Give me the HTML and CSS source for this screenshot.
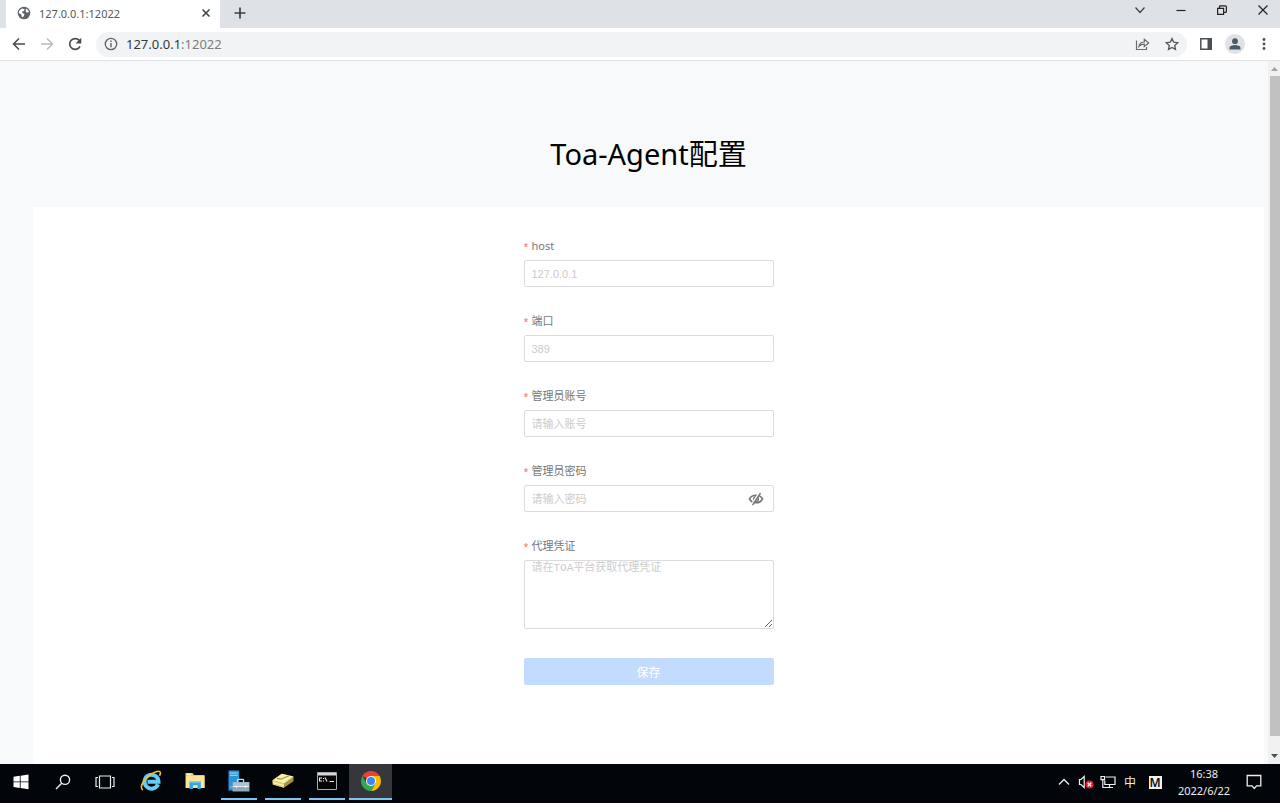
FILE: index.html
```
<!DOCTYPE html>
<html lang="zh-CN">
<head>
  <meta charset="UTF-8">
  <meta name="viewport" content="width=device-width, initial-scale=1.0">
  <title>Toa-Agent配置</title>
  <link rel="stylesheet" href="styles.css">
</head>
<body>
  <header class="browser">
    <div class="tabstrip">
      <div class="tab-before"></div>
      <div class="tab">
        <svg width="14" height="14" viewBox="0 0 14 14"><circle cx="7" cy="7" r="6.3" fill="#5f6368"/><path d="M2 5.2C3 3.6 4.300 2.600 6 2.400L7.800 3.400 6.500 5.200 4.800 5.800 5.600 7.300 7.500 7.700 7 9.500 5.800 11.600 4.700 10.500 4.300 8.500 1.800 7.100zM9 2.400l2 1.500 1 2-1.800.8L8.600 5.600z" fill="#fff"/></svg>
        <span class="tab-title">127.0.0.1:12022</span>
        <button class="icon-btn tab-close" aria-label="关闭标签页">
          <svg width="10" height="10" viewBox="0 0 10 10" fill="none" stroke="#3c4043" stroke-width="1.500"><path d="M1.500 1.500l7 7M8.500 1.500l-7 7"/></svg>
        </button>
      </div>
      <button class="icon-btn new-tab" aria-label="新标签页">
        <svg width="12" height="12" viewBox="0 0 12 12" fill="none" stroke="#3c4043" stroke-width="1.700"><path d="M6 .5v11M.5 6h11"/></svg>
      </button>
      <div class="window-controls">
        <button class="icon-btn" aria-label="搜索标签页">
          <svg width="12" height="12" viewBox="0 0 12 12" fill="none" stroke="#3c4043" stroke-width="1.200"><path d="M1.500 3.500L6 8.500l4.500-5"/></svg>
        </button>
        <button class="icon-btn" aria-label="最小化">
          <svg width="12" height="12" viewBox="0 0 12 12" fill="none" stroke="#222" stroke-width="1.200"><path d="M1.500 6.500h9"/></svg>
        </button>
        <button class="icon-btn" aria-label="还原">
          <svg width="12" height="12" viewBox="0 0 12 12" fill="none" stroke="#222" stroke-width="1.200"><path d="M1.600 4.400h6v6h-6zM3.500 4V2.700q0-.9.900-.9h5q1 0 1 1v4.600q0 1-1 1H8"/></svg>
        </button>
        <button class="icon-btn" aria-label="关闭">
          <svg width="12" height="12" viewBox="0 0 12 12" fill="none" stroke="#222" stroke-width="1.200"><path d="M1.500 1.500l9 9M10.500 1.500l-9 9"/></svg>
        </button>
      </div>
    </div>

    <div class="toolbar">
      <button class="icon-btn nav" aria-label="后退">
        <svg width="14" height="14" viewBox="0 0 14 14" fill="none" stroke="#4a4d51" stroke-width="1.600"><path d="M13 7H1.800M7 1.500L1.500 7 7 12.500"/></svg>
      </button>
      <button class="icon-btn nav" aria-label="前进" disabled>
        <svg width="14" height="14" viewBox="0 0 14 14" fill="none" stroke="#b9bbbe" stroke-width="1.500"><path d="M1 7h11.200M7 1.500L12.500 7 7 12.500"/></svg>
      </button>
      <button class="icon-btn nav" aria-label="重新加载">
        <svg width="14" height="14" viewBox="0 0 14 14"><path d="M12 9.300A5.400 5.400 0 1 1 11 3.200L12 4.500" fill="none" stroke="#4a4d51" stroke-width="1.700"/><path d="M13.300.8v5.700H7.600z" fill="#4a4d51"/></svg>
      </button>
      <div class="omnibox">
        <svg class="info" width="14" height="14" viewBox="0 0 14 14"><circle cx="7" cy="7" r="5.700" fill="none" stroke="#5f6368" stroke-width="1.300"/><path d="M6.300 6h1.400v4.300H6.300zM6.300 3.500h1.400v1.400H6.300z" fill="#5f6368"/></svg>
        <span class="url">127.0.0.1<span class="port">:12022</span></span>
        <button class="icon-btn" aria-label="分享">
          <svg width="15" height="14" viewBox="0 0 15 14" fill="none" stroke="#686b6f" stroke-width="1.200"><path d="M1.500 3.500v9h10V10M4 9.300C4.400 6.400 6 5 9.300 5V2.200L13.700 6 9.300 9.500V7.200C6.800 7.200 5.300 7.800 4 9.300z"/></svg>
        </button>
        <button class="icon-btn" aria-label="收藏">
          <svg width="14" height="14" viewBox="0 0 14 14" fill="none" stroke="#55585c" stroke-width="1.300"><path d="M7 1.600l1.700 3.600 4 .5-3 2.700.8 4L7 10.400l-3.500 2 .8-4-3-2.700 4-.5z"/></svg>
        </button>
      </div>
      <button class="icon-btn" aria-label="侧边栏">
        <svg width="14" height="14" viewBox="0 0 14 14"><path d="M1.800 1.800h10.400v10.400H1.800z" fill="none" stroke="#4d5156" stroke-width="1.500"/><path d="M8.500 1h4.500v12H8.500z" fill="#4d5156"/></svg>
      </button>
      <button class="icon-btn" aria-label="用户">
        <svg width="20" height="20" viewBox="0 0 20 20"><circle cx="10" cy="10" r="10" fill="#e1e2e5"/><circle cx="10" cy="7.200" r="2.900" fill="#4c5a6a"/><path d="M4.500 15.500v-1.700c0-2 3.500-2.900 5.500-2.900s5.500.9 5.500 2.900v1.700z" fill="#4c5a6a"/></svg>
      </button>
      <button class="icon-btn" aria-label="更多">
        <svg width="4" height="14" viewBox="0 0 4 14" fill="#4a4d51"><circle cx="2" cy="2.500" r="1.400"/><circle cx="2" cy="7" r="1.400"/><circle cx="2" cy="11.500" r="1.400"/></svg>
      </button>
    </div>
  </header>

  <div class="viewport">
    <main class="page">
      <h1>Toa-Agent配置</h1>
      <section class="panel">
        <form class="form">
          <div class="form-item">
            <label for="host">host</label>
            <input type="text" id="host" placeholder="127.0.0.1">
          </div>
          <div class="form-item">
            <label for="port">端口</label>
            <input type="text" id="port" placeholder="389">
          </div>
          <div class="form-item">
            <label for="account">管理员账号</label>
            <input type="text" id="account" placeholder="请输入账号">
          </div>
          <div class="form-item">
            <label for="password">管理员密码</label>
            <div class="password">
              <input type="password" id="password" placeholder="请输入密码">
              <button type="button" class="icon-btn eye" aria-label="显示密码">
                <svg width="16" height="14" viewBox="0 0 16 14" fill="none" stroke="#777"><path d="M1.500 7C4.300 2 11.700 2 14.500 7 11.700 12 4.300 12 1.500 7z" stroke-width="1.700"/><circle cx="8" cy="7" r="2.300" stroke-width="1.500"/><path d="M11.200 1L3.200 13" stroke="#fff" stroke-width="1.500"/><path d="M12.500 1.200L4.500 13.200" stroke-width="1.500"/></svg>
              </button>
            </div>
          </div>
          <div class="form-item">
            <label for="credential">代理凭证</label>
            <textarea id="credential" placeholder="请在TOA平台获取代理凭证"></textarea>
          </div>
          <button type="submit" class="save">保存</button>
        </form>
      </section>
    </main>
    <div class="scrollbar">
      <svg width="12" height="15" viewBox="0 0 12 15"><path d="M3 10l3.500-4 3.500 4z" fill="#a3a3a3"/></svg>
      <div class="thumb"></div>
      <svg class="down" width="12" height="28" viewBox="0 0 12 28"><path d="M3 18h7l-3.500 4z" fill="#505050"/></svg>
    </div>
  </div>

  <footer class="taskbar">
    <div class="start">
      <button class="icon-btn system" aria-label="开始">
        <svg width="16" height="16" viewBox="0 0 16 16" fill="#fff"><path d="M.5 2.700l6.300-.9v5.700H.5zM7.600 1.700L15.500.5v7H7.600zM.5 8.300h6.300V14l-6.300-.9zM7.600 8.300h7.900v7l-7.900-1.200z"/></svg>
      </button>
      <button class="icon-btn system" aria-label="搜索">
        <svg width="16" height="16" viewBox="0 0 16 16" fill="none" stroke="#eee" stroke-width="1.400"><circle cx="10" cy="5.800" r="4.600"/><path d="M6.700 9.200L1 15"/></svg>
      </button>
      <button class="icon-btn system" aria-label="任务视图">
        <svg width="20" height="14" viewBox="0 0 20 14" fill="none" stroke="#eee" stroke-width="1.200"><path d="M4.500 1h11v12h-11zM3 2.500H1v9h2M17 2.500h2v9h-2"/></svg>
      </button>
    </div>
    <button class="icon-btn app" aria-label="Internet Explorer">
      <svg width="22" height="22" viewBox="0 0 22 22" fill="none"><path d="M18 14.300A7 7 0 1 1 18.500 11.700H7.500" stroke="#62cdf5" stroke-width="4"/><path d="M3 20C-1.500 18 4 8.500 11 4.300 15.500 1.200 19.800.4 20.300 2.500c.2 1-.2 2.300-.9 3.300" stroke="#f3bd2f" stroke-width="1.600"/></svg>
    </button>
    <button class="icon-btn app" aria-label="文件资源管理器">
      <svg width="20" height="18" viewBox="0 0 20 18"><path d="M.5 1h7l1.500 2h10.500v13H.5z" fill="#eecb65"/><path d="M1 4h18.500v12H1z" fill="#fbe39a"/><path d="M2 1.800h4v1.400H2z" fill="#fff4c6"/><path d="M4.500 9.500h11.300V17h-3.300v-3.700H8V17H4.500z" fill="#2fa9df"/><path d="M4.500 9.500h11.300v1.200H4.500z" fill="#83d0ef"/></svg>
    </button>
    <button class="icon-btn app open" aria-label="服务器管理器">
      <svg width="22" height="22" viewBox="0 0 22 22"><path d="M.5.500h10.700v20H.5z" fill="#2b93d8"/><path d="M1.800 3h8M1.800 5.300h8" stroke="#a8dbf8"/><path d="M2 17h4" stroke="#8acbee"/><path d="M9.500 12.500V10q0-.7.700-.7h4.600q.7 0 .7.700v2.500" fill="none" stroke="#cfdae2" stroke-width="1.300"/><path d="M4.500 12h17v9.500h-17z" fill="#8ca9bc"/><path d="M5 12.500h16v4H5z" fill="#a9c3d3"/><path d="M5 16.500h16M8.500 15.500v2.500M17.500 15.500v2.500" stroke="#e4edf3"/></svg>
    </button>
    <button class="icon-btn app open" aria-label="工具">
      <svg width="22" height="16" viewBox="0 0 22 16"><path d="M.5 7.300L9.800.8l11.700 2.700v4.700L11.800 14.800.8 11.400z" fill="#a5953d"/><path d="M.5 7.300L9.800.8l11.700 2.700L12 10.500z" fill="#f7efaa"/><path d="M.5 7.300L12 10.500v4.300L.8 11.400z" fill="#e4d47c"/><path d="M5 5.300l4 .9 8-3.500" fill="none" stroke="#9f9445" stroke-width="1.200"/><path d="M1 9.500l10.800 3" stroke="#fff8c5"/></svg>
    </button>
    <button class="icon-btn app open" aria-label="命令提示符">
      <svg width="20" height="18" viewBox="0 0 20 18"><path d="M.5.500h19v17H.5z" fill="#050505" stroke="#aaa"/><path d="M1 1h18v2.500H1z" fill="#d6d6d6"/><path d="M5 6H2.500v3H5M6.500 6v1M6.500 8.500v1M8 5.500l2 4M12.500 9.500H17" fill="none" stroke="#eee" stroke-width="1.100"/></svg>
    </button>
    <button class="icon-btn app open active" aria-label="Google Chrome">
      <svg width="20" height="20" viewBox="0 0 20 20"><path d="M10 10L1.340 5A10 10 0 0 1 18.660 5z" fill="#e94235"/><path d="M10 10V5h8.660A10 10 0 0 1 10 20l4.330-7.500z" fill="#fbbc05"/><path d="M1.340 5A10 10 0 0 0 10 20l4.330-7.500-8.660 0z" fill="#34a853"/><circle cx="10" cy="10" r="5" fill="#fff"/><circle cx="10" cy="10" r="4" fill="#4285f4"/></svg>
    </button>
    <div class="tray">
      <button class="icon-btn" aria-label="显示隐藏的图标">
        <svg width="12" height="12" viewBox="0 0 12 12" fill="none" stroke="#eee" stroke-width="1.300"><path d="M1 8.500L6 3.500l5 5"/></svg>
      </button>
      <button class="icon-btn" aria-label="音量">
        <svg width="16" height="14" viewBox="0 0 16 14"><path d="M1.500 4.500H3L6.200 1.500v11L3 9.500H1.500z" fill="none" stroke="#eee" stroke-width="1.200"/><circle cx="11.500" cy="9.500" r="4" fill="#e81c30"/><path d="M9.800 7.800l3.400 3.400M13.200 7.800l-3.400 3.400" stroke="#fff" stroke-width="1.300"/></svg>
      </button>
      <button class="icon-btn" aria-label="网络">
        <svg width="16" height="14" viewBox="0 0 16 14" fill="none" stroke="#eee" stroke-width="1.200"><path d="M5.500 2h9.500v7.500H4.800V5.500M9.500 9.500v3M5.500 12.500h7.500M1 1.500h3.500v3.200H1zM2.800 4.700v7.800H6"/></svg>
      </button>
      <button class="ime">中</button>
      <button class="ime mode"><span>M</span></button>
      <time class="clock" datetime="2022-06-22T16:38">16:38<br>2022/6/22</time>
      <button class="icon-btn" aria-label="通知">
        <svg width="16" height="16" viewBox="0 0 16 16" fill="none" stroke="#eee" stroke-width="1.300"><path d="M1.200 1.500h13.600v10.300h-4.300L8.300 14.500 6 11.800H1.200z"/></svg>
      </button>
    </div>
  </footer>
</body>
</html>
```

FILE: styles.css
```
* {
  box-sizing: border-box;
}

body {
  display: flex;
  flex-direction: column;
  height: 100vh;
  margin: 0;
  overflow: hidden;
  font-family: "Noto Sans", "Noto Sans CJK SC", sans-serif;
  background-color: #f8f9fb;
}

svg {
  display: block;
  flex: none;
}

button {
  padding: 0;
  border: none;
  background: none;
  color: inherit;
  font-family: inherit;
}

.icon-btn {
  display: flex;
  align-items: center;
  justify-content: center;
}

/* browser */
.tabstrip {
  display: flex;
  height: 28px;
  background-color: #dee1e6;
}

.tab-before {
  width: 6px;
  border-bottom-right-radius: 6px;
}

.tab {
  display: flex;
  align-items: center;
  gap: 8px;
  width: 214px;
  padding: 0 9px 2px 11px;
  background-color: #fff;
}

.tab-title {
  flex: 1;
  font-size: 11px;
  color: #55585c;
}

.new-tab {
  width: 40px;
  height: 26px;
}

.window-controls {
  display: flex;
  gap: 7px;
  height: 20px;
  margin-left: auto;
}

.window-controls .icon-btn {
  width: 34px;
}

.toolbar {
  display: flex;
  align-items: center;
  height: 33px;
  padding: 0 2px 0 5px;
  background-color: #fff;
  border-bottom: 1px solid #dfe1e4;
}

.toolbar .icon-btn {
  width: 29px;
  height: 25px;
}

.toolbar .nav {
  width: 28px;
}

.omnibox {
  display: flex;
  flex: 1;
  align-items: center;
  height: 25px;
  margin: 0 4px 0 7px;
  padding: 0 1px 0 8px;
  background-color: #f1f3f4;
  border-radius: 13px;
}

.url {
  flex: 1;
  margin-left: 8px;
  font-size: 13px;
  line-height: 25px;
  color: #35383c;
}

.port {
  color: #7b7e82;
}

/* page */
.viewport {
  display: flex;
  flex: 1;
  min-height: 0;
}

.page {
  display: flex;
  flex: 1;
  flex-direction: column;
  padding: 0 4px 0 33px;
}

h1 {
  margin: 0;
  padding: 75px 0 35px;
  font-size: 29px;
  font-weight: 400;
  line-height: 36px;
  text-align: center;
  color: #000;
}

.panel {
  flex: 1;
  padding-top: 29px;
  background-color: #fff;
}

.form {
  width: 250px;
  margin: 0 auto;
  font-size: 11px;
}

.form-item {
  margin-bottom: 24px;
}

.form-item label {
  display: block;
  margin-bottom: 4px;
  line-height: 20px;
  color: #777;
}

.form-item label::before {
  content: "*";
  margin-right: 3px;
  font-size: 9px;
  line-height: 1;
  color: #f56c6c;
}

input,
textarea {
  display: block;
  width: 100%;
  height: 27px;
  padding: 0 7px;
  border: 1px solid #dcdcde;
  border-radius: 2px;
  background-color: #fff;
  font-family: "Liberation Sans", "Noto Sans CJK SC", sans-serif;
  font-size: 11px;
}

textarea {
  height: 69px;
  font-family: "Liberation Mono", "Noto Sans CJK SC", monospace;
  line-height: 15px;
  resize: vertical;
}

::placeholder {
  color: #ccc;
}

.password {
  position: relative;
}

.eye {
  position: absolute;
  top: 0;
  right: 10px;
  height: 27px;
}

.save {
  width: 100%;
  height: 27px;
  margin-top: 5px;
  border-radius: 2px;
  background-color: #c2dbff;
  color: #fff;
  font-size: 12px;
}

.scrollbar {
  display: flex;
  flex-direction: column;
  width: 12px;
  background-color: #f1f1f1;
}

.thumb {
  flex: 1;
  margin-left: 2px;
  background-color: #c1c1c1;
}

/* taskbar */
.taskbar {
  display: flex;
  height: 39px;
  padding-bottom: 3px;
  background-color: #02050a;
  color: #eee;
}

.start {
  display: flex;
  padding-right: 3px;
}

.system {
  width: 42px;
}

.app {
  width: 44px;
  border-bottom: 2px solid transparent;
}

.open {
  width: 36px;
  margin: 0 4px;
  border-bottom-color: #80c4f4;
}

.active {
  width: 43px;
  margin: 0;
  background-color: #35373b;
}

.tray {
  display: flex;
  align-items: center;
  margin-left: auto;
  padding-right: 15px;
}

.tray .icon-btn,
.ime {
  width: 22px;
}

.ime {
  font-size: 12px;
}

.mode {
  display: flex;
  justify-content: center;
  width: 28px;
}

.mode span {
  width: 13px;
  background-color: #f2f2f2;
  color: #111;
  font-weight: 600;
  line-height: 13px;
}

.clock {
  width: 70px;
  margin-right: 4px;
  font-size: 11px;
  line-height: 17px;
  text-align: center;
}
```
